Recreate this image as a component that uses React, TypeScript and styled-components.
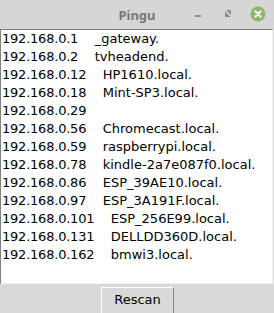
import * as React from 'react';
import styled, { createGlobalStyle } from 'styled-components';

const hosts: [string, string][] = [
  ['192.168.0.1', '_gateway.'],
  ['192.168.0.2', 'tvheadend.'],
  ['192.168.0.12', 'HP1610.local.'],
  ['192.168.0.18', 'Mint-SP3.local.'],
  ['192.168.0.29', ''],
  ['192.168.0.56', 'Chromecast.local.'],
  ['192.168.0.59', 'raspberrypi.local.'],
  ['192.168.0.78', 'kindle-2a7e087f0.local.'],
  ['192.168.0.86', 'ESP_39AE10.local.'],
  ['192.168.0.97', 'ESP_3A191F.local.'],
  ['192.168.0.101', 'ESP_256E99.local.'],
  ['192.168.0.131', 'DELLDD360D.local.'],
  ['192.168.0.162', 'bmwi3.local.'],
];

const GlobalStyle = createGlobalStyle`
  html, body {
    margin: 0;
    padding: 0;
    background: #d9d9d9;
    overflow: hidden;
  }
`;

const Window = styled.div`
  width: 274px;
  height: 313px;
  display: flex;
  flex-direction: column;
  background: #d9d9d9;
  font-family: 'DejaVu Sans', sans-serif;
`;

const TitleBar = styled.div`
  height: 29px;
  flex: none;
  position: relative;
  display: flex;
  align-items: center;
  justify-content: center;
  background: #d6d6d6;
`;

const Title = styled.span`
  font-family: 'Noto Sans', 'DejaVu Sans', sans-serif;
  font-weight: bold;
  font-size: 13px;
  color: #787878;
`;

const Controls = styled.div`
  position: absolute;
  right: 8px;
  top: 6px;
  display: flex;
  align-items: center;
  gap: 14px;
`;

const ControlSlot = styled.div`
  width: 16px;
  height: 16px;
  display: flex;
  align-items: center;
  justify-content: center;
`;

const ListBox = styled.div`
  height: 255px;
  flex: none;
  box-sizing: border-box;
  background: #ffffff;
  border-left: 1px solid #7f7f7f;
  border-top: 1px solid #7f7f7f;
  border-right: 1px solid #f4f4f4;
  border-bottom: 1px solid #f4f4f4;
  padding: 0 0 0 1px;
  margin-right: 1px;
  overflow: hidden;
`;

const Row = styled.div`
  height: 18px;
  line-height: 18px;
  font-size: 13px;
  color: #000;
  white-space: pre;
`;

const Ip = styled.span`
  letter-spacing: -0.22px;
`;

const Footer = styled.div`
  flex: 1;
  display: flex;
  justify-content: center;
  align-items: flex-start;
  padding-top: 3px;
`;

const Button = styled.button`
  width: 73px;
  height: 30px;
  box-sizing: border-box;
  margin-left: 1px;
  background: #d9d9d9;
  border-top: 1px solid #ffffff;
  border-left: 1px solid #ffffff;
  border-right: 1px solid #8a8a8a;
  border-bottom: 1px solid #8a8a8a;
  font-family: 'DejaVu Sans', sans-serif;
  font-size: 13px;
  color: #000;
  padding: 0 0 5px 0;
`;

const App = () => (
  <Window>
    <GlobalStyle />
    <TitleBar>
      <Title>Pingu</Title>
      <Controls>
        <ControlSlot>
          <svg width="10" height="10" viewBox="0 0 10 10">
            <rect x="2" y="6" width="6" height="2" fill="#8a8a8a" />
          </svg>
        </ControlSlot>
        <ControlSlot>
          <svg width="10" height="10" viewBox="0 0 10 10">
            <path d="M3 1 L8 1 L8 6 Z M2 2.5 L2 8 L7.5 8 Z" fill="#8a8a8a" />
          </svg>
        </ControlSlot>
        <ControlSlot>
          <svg width="16" height="16" viewBox="0 0 16 16">
            <circle cx="8" cy="8" r="7.5" fill="#8db66a" />
            <path d="M5.3 5.3 L10.7 10.7 M10.7 5.3 L5.3 10.7" stroke="#fff" strokeWidth="2" strokeLinecap="round" />
          </svg>
        </ControlSlot>
      </Controls>
    </TitleBar>
    <ListBox>
      {hosts.map(([ip, name]) => (
        <Row key={ip}>
          <Ip>{ip}</Ip>
          {'    ' + name}
        </Row>
      ))}
    </ListBox>
    <Footer>
      <Button>Rescan</Button>
    </Footer>
  </Window>
);

export default App;
